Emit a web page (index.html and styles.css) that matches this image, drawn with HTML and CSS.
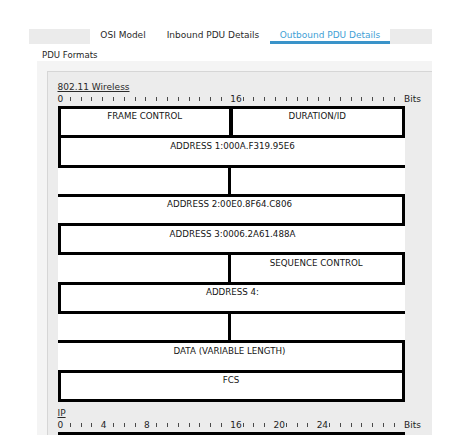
FILE: index.html
```html
<!DOCTYPE html>
<html>
<head>
<meta charset="utf-8">
<link rel="stylesheet" href="styles.css">
</head>
<body>
<div class="tabbar">
  <div class="filler left"></div>
  <div class="tab t1">OSI Model</div>
  <div class="tab t2">Inbound PDU Details</div>
  <div class="tab t3 active">Outbound PDU Details</div>
  <div class="filler right"></div>
</div>
<div class="caption">PDU Formats</div>
<div class="panel">
  <div class="inner">
    <div class="section">
      <div class="proto">802.11 Wireless</div>
      <div class="ruler">
        <span class="slot"><span class="num">0</span></span>
        <span class="slot"><i></i></span><span class="slot"><i></i></span><span class="slot"><i></i></span><span class="slot"><i></i></span><span class="slot"><i></i></span>
        <span class="slot"><i></i></span><span class="slot"><i></i></span><span class="slot"><i></i></span><span class="slot"><i></i></span><span class="slot"><i></i></span>
        <span class="slot"><i></i></span><span class="slot"><i></i></span><span class="slot"><i></i></span><span class="slot"><i></i></span><span class="slot"><i></i></span>
        <span class="slot"><span class="num">16</span></span>
        <span class="slot"><i></i></span><span class="slot"><i></i></span><span class="slot"><i></i></span><span class="slot"><i></i></span><span class="slot"><i></i></span>
        <span class="slot"><i></i></span><span class="slot"><i></i></span><span class="slot"><i></i></span><span class="slot"><i></i></span><span class="slot"><i></i></span>
        <span class="slot"><i></i></span><span class="slot"><i></i></span><span class="slot"><i></i></span><span class="slot"><i></i></span><span class="slot"><i></i></span>
        <span class="bits">Bits</span>
      </div>
      <div class="frame">
        <div class="row">
          <div class="cell half bl db-r">FRAME CONTROL</div>
          <div class="cell half br db-l">DURATION/ID</div>
        </div>
        <div class="row">
          <div class="cell full bl">ADDRESS 1:000A.F319.95E6</div>
        </div>
        <div class="row">
          <div class="cell half div"></div>
          <div class="cell half"></div>
        </div>
        <div class="row">
          <div class="cell full br">ADDRESS 2:00E0.8F64.C806</div>
        </div>
        <div class="row">
          <div class="cell full bl">ADDRESS 3:0006.2A61.488A</div>
        </div>
        <div class="row">
          <div class="cell half div"></div>
          <div class="cell half br">SEQUENCE CONTROL</div>
        </div>
        <div class="row">
          <div class="cell full bl">ADDRESS 4:</div>
        </div>
        <div class="row">
          <div class="cell half div"></div>
          <div class="cell half"></div>
        </div>
        <div class="row">
          <div class="cell full br">DATA (VARIABLE LENGTH)</div>
        </div>
        <div class="row last">
          <div class="cell full bl br">FCS</div>
        </div>
      </div>
    </div>
    <div class="section ip">
      <div class="proto">IP</div>
      <div class="ruler">
        <span class="slot"><span class="num">0</span></span>
        <span class="slot"><i></i></span><span class="slot"><i></i></span><span class="slot"><i></i></span>
        <span class="slot"><span class="num">4</span></span>
        <span class="slot"><i></i></span><span class="slot"><i></i></span><span class="slot"><i></i></span>
        <span class="slot"><span class="num">8</span></span>
        <span class="slot"><i></i></span><span class="slot"><i></i></span><span class="slot"><i></i></span><span class="slot"><i></i></span>
        <span class="slot"><i></i></span><span class="slot"><i></i></span><span class="slot"><i></i></span>
        <span class="slot"><span class="num">16</span></span>
        <span class="slot"><i></i></span><span class="slot"><i></i></span><span class="slot"><i></i></span>
        <span class="slot"><span class="num">20</span></span>
        <span class="slot"><i></i></span><span class="slot"><i></i></span><span class="slot"><i></i></span>
        <span class="slot"><span class="num">24</span></span>
        <span class="slot"><i></i></span><span class="slot"><i></i></span><span class="slot"><i></i></span><span class="slot"><i></i></span>
        <span class="slot"><i></i></span><span class="slot"><i></i></span><span class="slot"><i></i></span>
        <span class="bits">Bits</span>
      </div>
      <div class="frame">
        <div class="row iprow">
          <div class="cell b4 bl">&nbsp;</div>
          <div class="cell b4 dl">&nbsp;</div>
          <div class="cell b8 dl">&nbsp;</div>
          <div class="cell b16 dl br">&nbsp;</div>
        </div>
      </div>
    </div>
  </div>
</div>
</body>
</html>
```
FILE: styles.css
```css
html, body {
  margin: 0;
  padding: 0;
  background: #ffffff;
}
body {
  font-family: "DejaVu Sans", "Liberation Sans", sans-serif;
  color: #1e1e1e;
}
.tabbar {
  display: flex;
  margin: 29px 0 0 29px;
  width: 403px;
  height: 15px;
}
.filler {
  background: #ebebeb;
}
.filler.left { width: 61px; }
.filler.right { flex: 1; }
.tab {
  box-sizing: border-box;
  height: 15px;
  font-size: 9px;
  line-height: 13px;
  text-align: center;
  color: #2a2a2a;
  white-space: nowrap;
  background: #ffffff;
}
.t1 { width: 66px; }
.t2 { width: 114px; }
.t3 { width: 120px; }
.tab.active {
  color: #3f9fd6;
  border-bottom: 3px solid #3a93c9;
  line-height: 12px;
}
.caption {
  margin: 6px 0 0 42px;
  font-size: 8.6px;
  line-height: 10px;
  color: #1e1e1e;
}
.panel {
  margin: 1px 0 0 37px;
  width: 395px;
  height: 374px;
  background: #f4f4f4;
  overflow: hidden;
}
.inner {
  box-sizing: border-box;
  margin: 10px 0 0 10px;
  height: 400px;
  background: #ececec;
  border-top: 1px solid #d6d6d6;
  border-left: 1px solid #d6d6d6;
  padding: 10px 0 0 9.5px;
}
.section.ip {
  margin-top: 6.5px;
}
.proto {
  font-size: 9px;
  line-height: 11px;
  text-decoration: underline;
  color: #2a2a2a;
  white-space: nowrap;
}
.ruler {
  display: flex;
  align-items: baseline;
  height: 13px;
  font-size: 9px;
  line-height: 13px;
  color: #1e1e1e;
  white-space: nowrap;
}
.slot {
  flex: none;
  width: 10.8px;
}
.slot i {
  display: inline-block;
  width: 1px;
  height: 4px;
  margin-left: 1.5px;
  margin-bottom: 1px;
  background: #4a4a4a;
  vertical-align: baseline;
}
.bits {
  margin-left: 1px;
}
.frame {
  width: 347px;
}
.row {
  display: flex;
  height: 26.3px;
  border-top: 3px solid #000000;
  background: #ffffff;
}
.row.last {
  border-bottom: 3px solid #000000;
}
.cell {
  box-sizing: border-box;
  font-size: 8.7px;
  line-height: 11px;
  padding-top: 2.5px;
  text-align: center;
  color: #151515;
  white-space: nowrap;
}
.half { width: 50%; }
.full { width: 100%; }
.bl { border-left: 3px solid #000000; }
.br { border-right: 3px solid #000000; }
.div { border-right: 3px solid #000000; }
.db-r { border-right: 2px solid #000000; padding-top: 1.5px; }
.db-l { border-left: 2px solid #000000; padding-top: 1.5px; }
.dl { border-left: 3px solid #000000; }
.iprow { height: 40px; }
.b4 { width: 43.2px; }
.b8 { width: 86.4px; }
.b16 { flex: 1; }
```
